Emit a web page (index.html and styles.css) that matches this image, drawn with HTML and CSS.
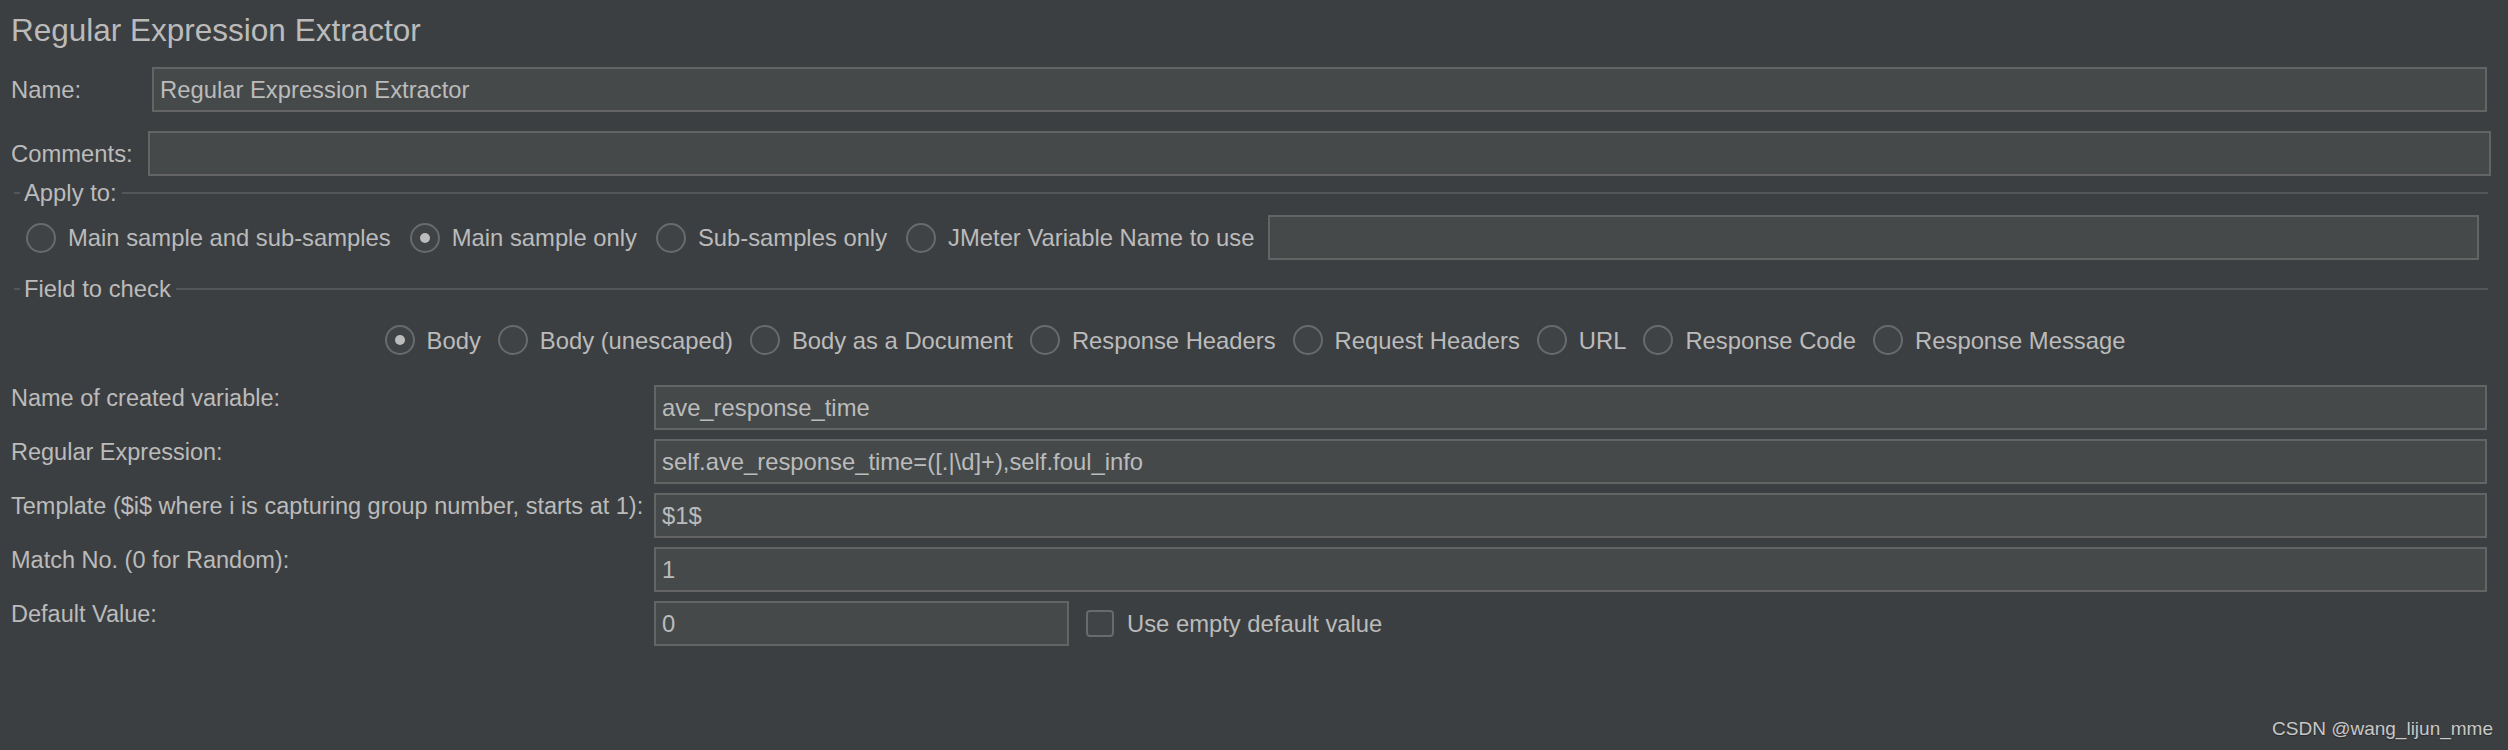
FILE: index.html
```html
<!DOCTYPE html>
<html lang="en">
<head>
<meta charset="utf-8">
<title>Regular Expression Extractor</title>
<link rel="stylesheet" href="styles.css">
</head>
<body>
<div class="page">
  <h1 class="title">Regular Expression Extractor</h1>

  <div class="name-row">
    <label class="name-label">Name:</label>
    <input class="field grow" type="text" value="Regular Expression Extractor">
  </div>

  <div class="comments-row">
    <label class="comments-label">Comments:</label>
    <input class="field grow" type="text" value="">
  </div>

  <div class="legend legend-apply">
    <span class="legend-dash"></span>
    <span class="legend-text">Apply to:</span>
    <span class="legend-line"></span>
  </div>

  <div class="apply-row">
    <span class="option"><span class="radio"></span><span class="option-text">Main sample and sub-samples</span></span>
    <span class="option"><span class="radio checked"></span><span class="option-text">Main sample only</span></span>
    <span class="option"><span class="radio"></span><span class="option-text">Sub-samples only</span></span>
    <span class="option"><span class="radio"></span><span class="option-text">JMeter Variable Name to use</span></span>
    <input class="field grow var-field" type="text" value="">
  </div>

  <div class="legend legend-field">
    <span class="legend-dash"></span>
    <span class="legend-text">Field to check</span>
    <span class="legend-line"></span>
  </div>

  <div class="check-row">
    <span class="option"><span class="radio checked"></span><span class="option-text">Body</span></span>
    <span class="option"><span class="radio"></span><span class="option-text">Body (unescaped)</span></span>
    <span class="option"><span class="radio"></span><span class="option-text">Body as a Document</span></span>
    <span class="option"><span class="radio"></span><span class="option-text">Response Headers</span></span>
    <span class="option"><span class="radio"></span><span class="option-text">Request Headers</span></span>
    <span class="option"><span class="radio"></span><span class="option-text">URL</span></span>
    <span class="option"><span class="radio"></span><span class="option-text">Response Code</span></span>
    <span class="option"><span class="radio"></span><span class="option-text">Response Message</span></span>
  </div>

  <div class="form-grid">
    <label class="grid-label">Name of created variable:</label>
    <input class="field" type="text" value="ave_response_time">

    <label class="grid-label">Regular Expression:</label>
    <input class="field" type="text" value="self.ave_response_time=([.|\d]+),self.foul_info">

    <label class="grid-label">Template ($i$ where i is capturing group number, starts at 1):</label>
    <input class="field" type="text" value="$1$">

    <label class="grid-label">Match No. (0 for Random):</label>
    <input class="field" type="text" value="1">

    <label class="grid-label">Default Value:</label>
    <div class="default-row">
      <input class="field default-field" type="text" value="0">
      <span class="checkbox"></span>
      <span class="option-text">Use empty default value</span>
    </div>
  </div>
</div>
<div class="watermark">CSDN @wang_lijun_mme</div>
</body>
</html>
```

FILE: styles.css
```css
html, body {
  margin: 0;
  padding: 0;
  background: #3c3f41;
  width: 2508px;
  height: 750px;
  overflow: hidden;
}

body {
  position: relative;
  font-family: "Liberation Sans", Arial, sans-serif;
  font-size: 23.8px;
  color: #bbbbbb;
}

.page {
  padding: 12px 17px 0 11px;
  display: flex;
  flex-direction: column;
}

.title {
  margin: 0;
  font-size: 31.5px;
  font-weight: normal;
  line-height: 36px;
  color: #bbbbbb;
}

.field {
  box-sizing: border-box;
  height: 45px;
  margin: 0;
  padding: 0 6px;
  border: 2px solid #646464;
  border-radius: 0;
  background: #45494a;
  color: #bbbbbb;
  font-family: inherit;
  font-size: 23.8px;
  outline: none;
  min-width: 0;
}

.grow {
  flex: 1;
}

.name-row {
  margin-top: 19px;
  margin-right: 4px;
  display: flex;
  align-items: center;
}

.name-label {
  width: 141px;
  flex: none;
  line-height: 27px;
}

.comments-row {
  margin-top: 19px;
  display: flex;
  align-items: center;
}

.comments-label {
  width: 137px;
  flex: none;
  line-height: 27px;
}

.legend {
  display: flex;
  align-items: center;
  height: 27px;
  margin-left: 3px;
  margin-right: 3px;
}

.legend-apply {
  margin-top: 3px;
}

.legend-field {
  margin-top: 15px;
}

.legend-dash {
  width: 6px;
  height: 2px;
  background: #545759;
  flex: none;
}

.legend-text {
  margin: 0 5px 0 4px;
  line-height: 27px;
}

.legend-line {
  flex: 1;
  height: 2px;
  background: #545759;
}

.apply-row {
  margin-top: 9px;
  padding-left: 15px;
  margin-right: 12px;
  display: flex;
  align-items: center;
  height: 45px;
}

.var-field {
  margin-left: -5px;
}

.option {
  display: inline-flex;
  align-items: center;
  gap: 12px;
  margin-right: 19px;
  flex: none;
}

.option-text {
  line-height: 27px;
  white-space: nowrap;
}

.radio {
  box-sizing: border-box;
  width: 30px;
  height: 30px;
  border: 2px solid #686a6c;
  border-radius: 50%;
  background: #3f4345;
  display: flex;
  align-items: center;
  justify-content: center;
  flex: none;
}

.radio.checked::after {
  content: "";
  width: 10px;
  height: 10px;
  border-radius: 50%;
  background: #bcbcbc;
}

.check-row {
  margin-top: 23px;
  height: 30px;
  display: flex;
  align-items: center;
  justify-content: center;
  margin-left: 8px;
}

.check-row .option {
  margin-right: 17px;
}

.check-row .option:last-child {
  margin-right: 0;
}

.form-grid {
  margin-top: 30px;
  margin-right: 4px;
  display: grid;
  grid-template-columns: 643px 1fr;
  row-gap: 9px;
}

.grid-label {
  align-self: start;
  font-size: 23.5px;
  line-height: 27px;
  white-space: nowrap;
}

.default-row {
  display: flex;
  align-items: center;
}

.default-field {
  width: 415px;
  flex: none;
}

.checkbox {
  box-sizing: border-box;
  width: 28px;
  height: 27px;
  margin: 0 13px 0 17px;
  border: 2px solid #686a6c;
  border-radius: 4px;
  background: #404447;
  flex: none;
}

.watermark {
  position: absolute;
  right: 15px;
  bottom: 10px;
  font-size: 19px;
  line-height: 22px;
  color: #c8c8c8;
  text-shadow: 0 1px 1px rgba(0, 0, 0, 0.35);
}
```
